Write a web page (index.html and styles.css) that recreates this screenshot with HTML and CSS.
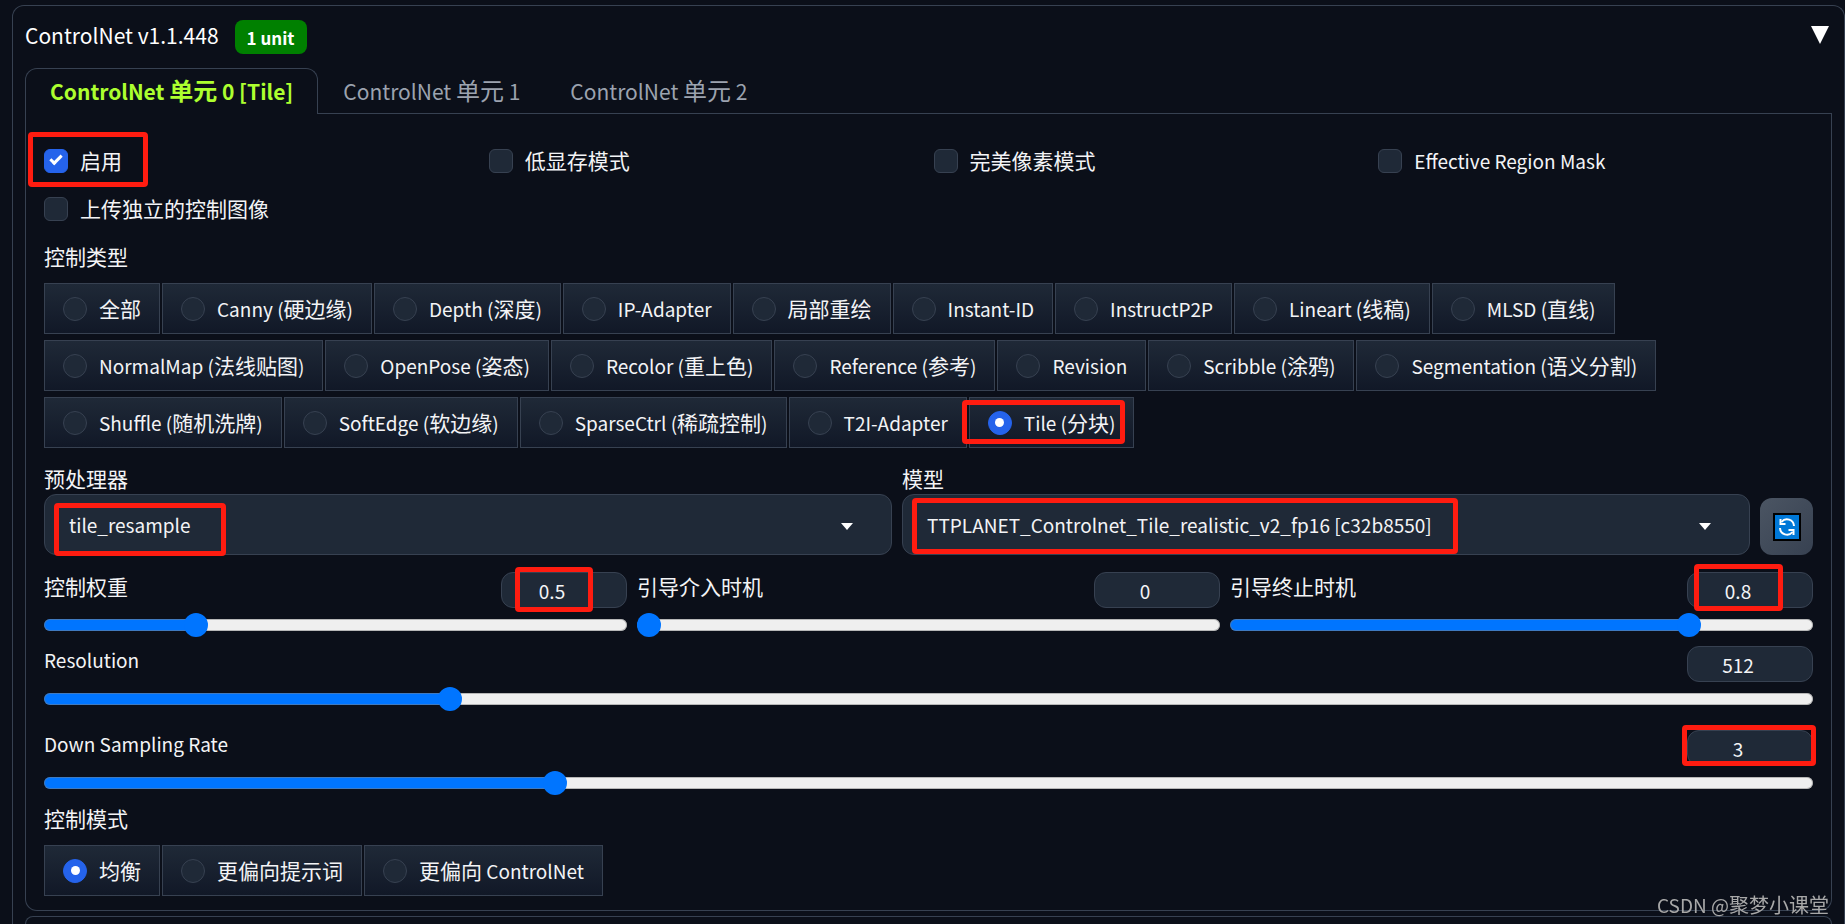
FILE: index.html
```html
<!DOCTYPE html>
<html lang="zh-CN">
<head>
    <meta charset="UTF-8">
    <meta name="viewport" content="width=device-width, initial-scale=1.0">
    <title>ControlNet</title>
    <link rel="stylesheet" href="styles.css">
</head>
<body>
    <main class="accordion">
        <header class="accordion-head">
            <h1 class="title">ControlNet v1.1.448</h1>
            <span class="badge">1 unit</span>
            <button class="toggle" type="button" aria-label="折叠">
                <svg width="18" height="18" viewBox="0 0 18 18"><polygon points="0,0 18,0 9,18" fill="#fff"/></svg>
            </button>
        </header>

        <nav class="tabs">
            <button type="button" class="tab selected">ControlNet <span class="cn">单元</span> 0 [Tile]</button>
            <button type="button" class="tab">ControlNet <span class="cn">单元</span> 1</button>
            <button type="button" class="tab">ControlNet <span class="cn">单元</span> 2</button>
        </nav>

        <section class="unit">
            <div class="checks">
                <label class="check"><input type="checkbox" checked><span class="cn">启用</span><i class="mark mark-enable"></i></label>
                <label class="check"><input type="checkbox"><span class="cn">低显存模式</span></label>
                <label class="check"><input type="checkbox"><span class="cn">完美像素模式</span></label>
                <label class="check"><input type="checkbox"><span>Effective Region Mask</span></label>
                <label class="check"><input type="checkbox"><span class="cn">上传独立的控制图像</span></label>
            </div>

            <div class="group">
                <div class="caption cn" id="type-label">控制类型</div>
                <div class="radios" role="radiogroup" aria-labelledby="type-label">
                    <label class="radio"><input type="radio" name="type"><span><span class="cn">全部</span></span></label>
                    <label class="radio"><input type="radio" name="type"><span>Canny (<span class="cn">硬边缘</span>)</span></label>
                    <label class="radio"><input type="radio" name="type"><span>Depth (<span class="cn">深度</span>)</span></label>
                    <label class="radio"><input type="radio" name="type"><span>IP-Adapter</span></label>
                    <label class="radio"><input type="radio" name="type"><span><span class="cn">局部重绘</span></span></label>
                    <label class="radio"><input type="radio" name="type"><span>Instant-ID</span></label>
                    <label class="radio"><input type="radio" name="type"><span>InstructP2P</span></label>
                    <label class="radio"><input type="radio" name="type"><span>Lineart (<span class="cn">线稿</span>)</span></label>
                    <label class="radio"><input type="radio" name="type"><span>MLSD (<span class="cn">直线</span>)</span></label>
                    <label class="radio"><input type="radio" name="type"><span>NormalMap (<span class="cn">法线贴图</span>)</span></label>
                    <label class="radio"><input type="radio" name="type"><span>OpenPose (<span class="cn">姿态</span>)</span></label>
                    <label class="radio"><input type="radio" name="type"><span>Recolor (<span class="cn">重上色</span>)</span></label>
                    <label class="radio"><input type="radio" name="type"><span>Reference (<span class="cn">参考</span>)</span></label>
                    <label class="radio"><input type="radio" name="type"><span>Revision</span></label>
                    <label class="radio"><input type="radio" name="type"><span>Scribble (<span class="cn">涂鸦</span>)</span></label>
                    <label class="radio"><input type="radio" name="type"><span>Segmentation (<span class="cn">语义分割</span>)</span></label>
                    <label class="radio"><input type="radio" name="type"><span>Shuffle (<span class="cn">随机洗牌</span>)</span></label>
                    <label class="radio"><input type="radio" name="type"><span>SoftEdge (<span class="cn">软边缘</span>)</span></label>
                    <label class="radio"><input type="radio" name="type"><span>SparseCtrl (<span class="cn">稀疏控制</span>)</span></label>
                    <label class="radio"><input type="radio" name="type"><span>T2I-Adapter</span></label>
                    <label class="radio"><input type="radio" name="type" checked><span>Tile (<span class="cn">分块</span>)</span><i class="mark mark-tile"></i></label>
                </div>
            </div>

            <div class="models">
                <div class="field">
                    <label class="cn" for="module">预处理器</label>
                    <div class="dropdown">
                        <select id="module"><option>tile_resample</option></select>
                        <svg class="caret" width="12" height="7" viewBox="0 0 12 7"><polygon points="0,0 12,0 6,7" fill="#fff"/></svg>
                        <i class="mark mark-module"></i>
                    </div>
                </div>
                <div class="field">
                    <label class="cn" for="model">模型</label>
                    <div class="dropdown">
                        <select id="model"><option>TTPLANET_Controlnet_Tile_realistic_v2_fp16 [c32b8550]</option></select>
                        <svg class="caret" width="12" height="7" viewBox="0 0 12 7"><polygon points="0,0 12,0 6,7" fill="#fff"/></svg>
                        <i class="mark mark-model"></i>
                    </div>
                </div>
                <button class="refresh" type="button" aria-label="刷新">
                    <svg width="28" height="28" viewBox="0 0 28 28">
                        <rect x="1" y="1" width="26" height="26" fill="#0078d7" stroke="#000" stroke-width="2"/>
                        <g fill="none" stroke="#fff" stroke-width="2">
                            <path d="M7 15a7 7 0 0 0 12.500 4"/>
                            <path d="M21 13a7 7 0 0 0-12.500-4"/>
                            <path d="M7.500 6v5h5M20.500 22v-5h-5"/>
                        </g>
                    </svg>
                </button>
            </div>

            <div class="sliders">
                <div class="slider">
                    <div class="slider-head">
                        <label class="cn" for="weight">控制权重</label>
                        <span class="number"><input type="number" value="0.5" step="0.05" aria-label="控制权重"><i class="mark mark-weight"></i></span>
                    </div>
                    <input type="range" id="weight" min="0" max="2" step="0.05" value="0.5" style="--fill: 0.25">
                </div>
                <div class="slider">
                    <div class="slider-head">
                        <label class="cn" for="start">引导介入时机</label>
                        <span class="number"><input type="number" value="0" step="0.01" aria-label="引导介入时机"></span>
                    </div>
                    <input type="range" id="start" min="0" max="1" step="0.01" value="0" style="--fill: 0">
                </div>
                <div class="slider">
                    <div class="slider-head">
                        <label class="cn" for="end">引导终止时机</label>
                        <span class="number"><input type="number" value="0.8" step="0.01" aria-label="引导终止时机"><i class="mark mark-end"></i></span>
                    </div>
                    <input type="range" id="end" min="0" max="1" step="0.01" value="0.8" style="--fill: 0.8">
                </div>
            </div>

            <div class="slider resolution">
                <div class="slider-head">
                    <label for="resolution">Resolution</label>
                    <span class="number"><input type="number" value="512" aria-label="Resolution"></span>
                </div>
                <input type="range" id="resolution" min="64" max="2048" step="8" value="512" style="--fill: 0.2258">
            </div>

            <div class="slider sampling">
                <div class="slider-head">
                    <label for="sampling">Down Sampling Rate</label>
                    <span class="number"><input type="number" value="3" aria-label="Down Sampling Rate"><i class="mark mark-sampling"></i></span>
                </div>
                <input type="range" id="sampling" min="1" max="8" step="1" value="3" style="--fill: 0.2857">
            </div>

            <div class="group mode">
                <div class="caption cn" id="mode-label">控制模式</div>
                <div class="radios" role="radiogroup" aria-labelledby="mode-label">
                    <label class="radio"><input type="radio" name="mode" checked><span><span class="cn">均衡</span></span></label>
                    <label class="radio"><input type="radio" name="mode"><span><span class="cn">更偏向提示词</span></span></label>
                    <label class="radio"><input type="radio" name="mode"><span><span class="cn">更偏向</span> ControlNet</span></label>
                </div>
            </div>
        </section>

        <section class="next-panel"></section>
    </main>
    <div class="watermark">CSDN @<span class="cn">聚梦小课堂</span></div>

    <script>
        document.querySelectorAll('input[type=range]').forEach(function(range){
            var number = range.parentNode.querySelector('input[type=number]')
            range.addEventListener('input', function(){
                range.style.setProperty('--fill', (range.value - range.min) / (range.max - range.min))
                number.value = range.value
            })
        })
    </script>
</body>
</html>
```

FILE: styles.css
```css
*{
    box-sizing: border-box;
}
body{
    margin: 0;
    min-height: 100vh;
    display: flex;
    background-color: #0b0f19;
    color: #f3f4f6;
    font-family: "Noto Sans CJK SC", "Noto Sans", sans-serif;
    font-size: 19px;
    line-height: 31px;
}
button, input, select{
    font: inherit;
    color: inherit;
    margin: 0;
}
.cn{
    font-size: 21px;
}
span.cn{
    line-height: 1;
}

/* accordion */
.accordion{
    flex: 1;
    display: flex;
    flex-direction: column;
    margin: 5px 0 0 12px;
    padding: 14px 12px 0;
    border: 1px solid #374151;
    border-bottom: 0;
    border-radius: 12px 12px 0 0;
}
.accordion-head{
    display: flex;
    align-items: flex-start;
    gap: 16px;
    margin-bottom: 14px;
}
.title{
    margin: 0;
    font-size: 21px;
    font-weight: 400;
    line-height: 30px;
    color: #fff;
}
.badge{
    padding: 2px 12px 1px;
    border-radius: 8px;
    background-color: green;
    color: #fff;
    font-size: 17px;
    font-weight: 700;
}
.toggle{
    display: flex;
    margin-left: auto;
    padding: 6px 3px;
    border: 0;
    background: none;
}

/* tabs */
.tabs{
    display: flex;
    border-bottom: 1px solid #374151;
}
.tab{
    margin-bottom: -1px;
    padding: 7px 24px;
    border: 1px solid transparent;
    border-bottom: 0;
    border-radius: 12px 12px 0 0;
    background: none;
    color: #9ca3af;
    font-size: 21px;
}
.tab .cn{
    font-size: 24px;
}
.tab.selected{
    border-color: #374151;
    background-color: #0b0f19;
    color: greenyellow;
    font-weight: 600;
}

.unit{
    padding: 31px 18px 14px;
    border: 1px solid #374151;
    border-top: 0;
    border-radius: 0 0 12px 12px;
}
.next-panel{
    flex: 1;
    min-height: 7px;
    margin-top: 5px;
    border: 1px solid #374151;
    border-bottom: 0;
    border-radius: 12px 12px 0 0;
}

/* check boxes and radios */
.checks{
    display: grid;
    grid-template-columns: repeat(4, 1fr);
    grid-auto-rows: 31px;
    gap: 17px 10px;
}
.check, .radio{
    position: relative;
    display: flex;
    align-items: center;
    gap: 12px;
}
.check input, .radio input{
    appearance: none;
    flex: none;
    display: grid;
    place-items: center;
    width: 24px;
    height: 24px;
    border: 1px solid #374151;
    border-radius: 6px;
    background-color: #1f2937;
}
.check input:checked, .radio input:checked{
    border-color: #2563eb;
    background-color: #2563eb;
}
.check input:checked::before{
    content: "";
    width: 9px;
    height: 4px;
    border: solid #fff;
    border-width: 0 0 3px 3px;
    transform: translateY(-2px) rotate(-45deg);
}
.radio input{
    border-radius: 50%;
}
.radio input:checked::before{
    content: "";
    width: 9px;
    height: 9px;
    border-radius: 50%;
    background-color: #fff;
}
.group{
    margin-top: 17px;
}
.caption{
    margin-bottom: 11px;
}
.radios{
    display: flex;
    flex-wrap: wrap;
    gap: 6px 2px;
}
.radio{
    padding: 9px 18px;
    border: 1px solid #374151;
    background-image: linear-gradient(#1f2937, #111827);
}

/* dropdowns */
.models{
    display: flex;
    align-items: flex-end;
    gap: 10px;
    margin-top: 15px;
}
.field{
    flex: 1;
    min-width: 0;
}
.field label{
    display: block;
}
.dropdown{
    position: relative;
    height: 61px;
}
.dropdown select{
    appearance: none;
    display: block;
    width: 100%;
    height: 100%;
    padding: 0 60px 0 24px;
    border: 1px solid #374151;
    border-radius: 12px;
    background-color: #1f2937;
}
.caret{
    position: absolute;
    right: 39px;
    top: 29px;
    pointer-events: none;
}
.refresh{
    display: grid;
    place-items: center;
    width: 53px;
    height: 57px;
    padding: 0;
    border: 0;
    border-radius: 12px;
    background-image: linear-gradient(to bottom right, #4b5563, #374151);
}

/* sliders */
.sliders{
    display: flex;
    gap: 10px;
    margin-top: 17px;
}
.slider{
    flex: 1;
}
.slider-head{
    display: flex;
    justify-content: space-between;
    margin-bottom: 5px;
    line-height: 28px;
}
.number{
    position: relative;
    width: 126px;
    height: 36px;
}
.number input{
    appearance: textfield;
    display: block;
    width: 100%;
    height: 100%;
    padding: 0 34px 0 10px;
    border: 1px solid #374151;
    border-radius: 12px;
    background-color: #1f2937;
    text-align: center;
}
.number input::-webkit-inner-spin-button{
    display: none;
}
input[type=range]{
    appearance: none;
    display: block;
    width: 100%;
    height: 24px;
    background: none;
}
input[type=range]::-webkit-slider-runnable-track{
    height: 12px;
    border-radius: 6px;
    box-shadow: inset 0 0 0 1px rgba(128, 128, 128, 0.5);
    background: linear-gradient(to right, #0075ff calc(12px + (100% - 24px) * var(--fill)), #efefef 0);
}
input[type=range]::-webkit-slider-thumb{
    appearance: none;
    width: 24px;
    height: 24px;
    margin-top: -6px;
    border-radius: 50%;
    background-color: #0075ff;
}
.resolution{
    margin-top: 9px;
}
.sampling{
    margin-top: 19px;
}
.mode{
    margin-top: 8px;
}

/* red highlight frames */
.mark{
    position: absolute;
    border: 5px solid #ff1c10;
    border-radius: 4px;
    pointer-events: none;
}
.mark-enable{
    left: -16px;
    top: -13px;
    width: 120px;
    height: 55px;
}
.mark-tile{
    inset: 2px 8px 3px -8px;
}
.mark-module{
    left: 10px;
    top: 9px;
    width: 172px;
    height: 53px;
}
.mark-model{
    left: 10px;
    top: 4px;
    width: 546px;
    height: 56px;
}
.mark-weight{
    inset: -5px 34px -4px 14px;
}
.mark-end{
    inset: -8px 30px -3px 7px;
}
.mark-sampling{
    inset: -5px -3px 0 -5px;
}

.watermark{
    position: fixed;
    right: 16px;
    bottom: 4px;
    color: #a8a8a8;
    font-size: 19px;
}
.watermark .cn{
    font-size: 20px;
}
```
